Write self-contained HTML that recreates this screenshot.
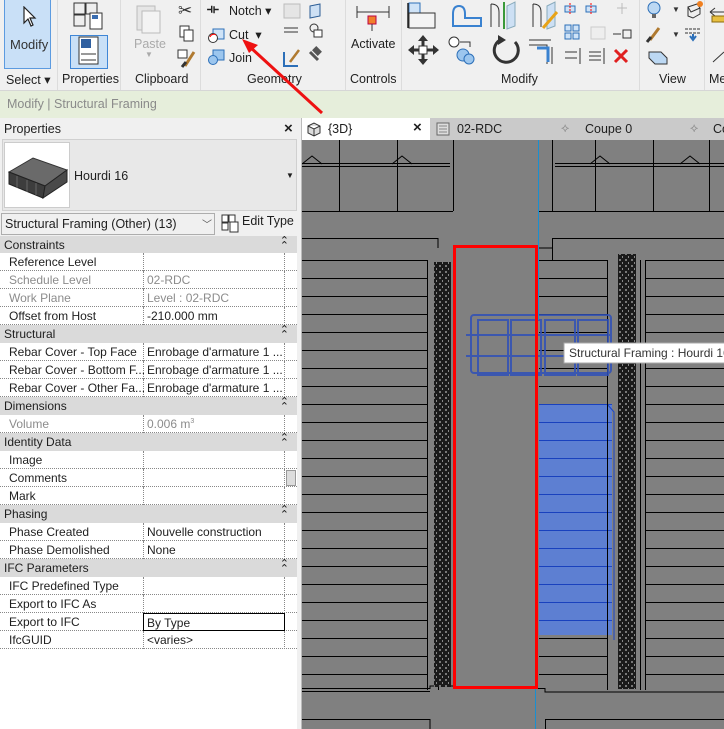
<!DOCTYPE html>
<html><head><meta charset="utf-8"><style>
*{margin:0;padding:0;box-sizing:border-box}
body{width:724px;height:729px;overflow:hidden;position:relative;background:#fff;font-family:"Liberation Sans",sans-serif;font-size:12px;color:#1e1e1e}
.a{position:absolute}
.rib{left:0;top:0;width:724px;height:91px;background:#f0f0f0;border-bottom:1px solid #d6d6d6}
.lbl{position:absolute;top:72px;font-size:12.5px;color:#222}
.sep{position:absolute;top:0;width:1px;height:90px;background:#dcdcdc}
.ctx{left:0;top:91px;width:724px;height:27px;background:#e6eedb;color:#8a8a8a;font-size:12.5px;padding:6px 0 0 7px}
.t{position:absolute;font-size:12.5px;white-space:nowrap}
.row{position:absolute;left:0;width:297px;height:18px;background:#fff;border-bottom:1px dotted #888}
.row .n{position:absolute;left:9px;top:2px;white-space:nowrap}
.row .v{position:absolute;left:143px;top:0;width:142px;height:18px;border-left:1px dotted #888;border-right:1px dotted #888;padding:2px 0 0 3px;white-space:nowrap;overflow:hidden}
.row.g .n,.row.g .v{color:#8c8c8c}
.hd{position:absolute;left:0;width:297px;height:18px;background:#dadada;padding:2px 0 0 4px}
.hd:after{content:"⌃";position:absolute;right:8px;top:1px;font-size:11px;line-height:8px;border-bottom:0}
.hd:before{content:"⌃";position:absolute;right:8px;top:6px;font-size:11px;line-height:8px}
</style></head><body>
<div class="a rib">
  <div class="a" style="left:4px;top:0;width:47px;height:69px;background:#c9e0f7;border:1px solid #5c9be0;border-top:none"></div>
  <svg class="a" style="left:22px;top:6px" width="16" height="22"><path d="M2 1 L2 17 L6 13 L9 20 L11 19 L8 12 L13 12 Z" fill="#fff" stroke="#222" stroke-width="1.2"/></svg>
  <div class="t" style="left:10px;top:37px;font-size:13px;color:#333">Modify</div>
  <div class="lbl" style="left:6px">Select ▾</div>
  <div class="sep" style="left:57px"></div>
  <svg class="a" style="left:73px;top:1px" width="32" height="30"><rect x="1" y="2" width="11" height="11" fill="#eee" stroke="#333"/><rect x="13" y="2" width="11" height="11" fill="#eee" stroke="#333"/><rect x="1" y="14" width="11" height="11" fill="#eee" stroke="#333"/><rect x="17" y="12" width="12" height="16" fill="#fff" stroke="#333"/><rect x="19" y="14" width="6" height="4" fill="#3a6db0"/></svg>
  <div class="a" style="left:70px;top:35px;width:38px;height:34px;background:#c9e0f7;border:1px solid #3f86d6"></div>
  <svg class="a" style="left:77px;top:36px" width="24" height="30"><rect x="2" y="1" width="19" height="27" fill="#fff" stroke="#333"/><rect x="4" y="3" width="10" height="9" fill="#2f5fa0"/><line x1="4" y1="18" x2="19" y2="18" stroke="#333"/><line x1="4" y1="24" x2="19" y2="24" stroke="#333"/></svg>
  <div class="lbl" style="left:62px">Properties</div>
  <div class="sep" style="left:120px"></div>
  <svg class="a" style="left:134px;top:2px" width="30" height="34"><rect x="3" y="4" width="18" height="24" fill="#e6e6e6" stroke="#bbb"/><rect x="8" y="9" width="18" height="22" fill="#f3f3f3" stroke="#bbb"/></svg>
  <div class="t" style="left:134px;top:37px;color:#aaa">Paste</div>
  <div class="t" style="left:145px;top:50px;color:#aaa;font-size:8px">▼</div>
  <div class="t" style="left:178px;top:1px;font-size:17px;color:#333">✂</div>
  <svg class="a" style="left:178px;top:25px" width="18" height="18"><rect x="2" y="1" width="9" height="11" fill="#fff" stroke="#333"/><rect x="6" y="5" width="9" height="11" fill="#fff" stroke="#333"/></svg>
  <svg class="a" style="left:177px;top:48px" width="20" height="20"><rect x="1" y="2" width="9" height="8" fill="#fff" stroke="#333"/><path d="M8 18 L17 4" stroke="#b07a30" stroke-width="3"/><path d="M5 19 L9 14" stroke="#333" stroke-width="3"/></svg>
  <div class="lbl" style="left:135px">Clipboard</div>
  <div class="sep" style="left:200px"></div>
  <div class="t" style="left:207px;top:1px;font-weight:bold;font-size:13px">⟛</div>
  <div class="t" style="left:229px;top:3px">Notch ▾</div>
  <svg class="a" style="left:207px;top:27px" width="18" height="16"><rect x="6" y="2" width="11" height="10" fill="#cfe3f7" stroke="#2c6fb8"/><circle cx="6" cy="11" r="4.5" fill="#fff" stroke="#333"/><path d="M3 10 A4 4 0 0 1 9 8" stroke="red" fill="none"/></svg>
  <div class="t" style="left:229px;top:27px">Cut &nbsp;▾</div>
  <svg class="a" style="left:207px;top:49px" width="18" height="16"><rect x="6" y="1" width="11" height="10" fill="#9cc6ee" stroke="#2c6fb8"/><circle cx="6" cy="11" r="4.5" fill="#9cc6ee" stroke="#2c6fb8"/></svg>
  <div class="t" style="left:229px;top:51px">Join</div>
  <svg class="a" style="left:282px;top:2px" width="60" height="66"><rect x="2" y="2" width="16" height="14" fill="#e5e5e5" stroke="#bbb"/><path d="M28 4 L38 2 L38 14 L28 16 Z" fill="#cde0f4" stroke="#2c5d95"/><path d="M2 26 L16 26 M2 30 L16 30" stroke="#333"/><circle cx="32" cy="26" r="4" fill="none" stroke="#333"/><rect x="32" y="28" width="8" height="7" fill="#fff" stroke="#333"/><path d="M2 50 L2 64 L16 64" stroke="#2c6fb8" stroke-width="2" fill="none"/><path d="M8 60 L17 48" stroke="#b07a30" stroke-width="2.5"/><path d="M28 50 L36 58" stroke="#555" stroke-width="3"/><rect x="31" y="46" width="8" height="6" fill="#555" transform="rotate(45 35 49)"/></svg>
  <div class="lbl" style="left:247px">Geometry</div>
  <div class="sep" style="left:345px"></div>
  <svg class="a" style="left:355px;top:0" width="36" height="34"><path d="M2 12 L34 12 M2 6 L2 18 M34 6 L34 18" stroke="#333"/><rect x="13" y="16" width="8" height="8" fill="#f07f2a" stroke="#b04"/><line x1="17" y1="24" x2="17" y2="31" stroke="#333"/></svg>
  <div class="t" style="left:351px;top:37px">Activate</div>
  <div class="lbl" style="left:350px">Controls</div>
  <div class="sep" style="left:401px"></div>
  <svg class="a" style="left:405px;top:0" width="230" height="68"><rect x="4" y="3" width="11" height="10" fill="#cfe3f7" stroke="#2c6fb8"/><rect x="4" y="13" width="26" height="15" fill="#f4f4f4" stroke="#333"/><line x1="3" y1="3" x2="3" y2="28" stroke="#222" stroke-width="1.5"/>
  <path d="M48 26 L48 14 Q48 6 54 6 Q60 6 60 14 L60 18 L76 18 L76 26 Z" fill="none" stroke="#3a82d0" stroke-width="2"/>
  <path d="M86 4 L86 27 M86 4 Q94 4 94 12 L94 27" fill="none" stroke="#333"/><line x1="99" y1="2" x2="99" y2="29" stroke="#3a9a3a" stroke-width="2"/><path d="M102 6 L110 2 L110 26 L102 29 Z" fill="#cde0f4" stroke="#8ab"/>
  <path d="M128 4 L128 27 M128 4 Q136 4 136 12 L136 27" fill="none" stroke="#333"/><path d="M142 6 L150 2 L150 26 L142 29 Z" fill="#cde0f4" stroke="#8ab"/><path d="M138 28 L152 12" stroke="#e8a317" stroke-width="3"/>
  <path d="M5 50 L32 50 M18 37 L18 63" stroke="#333" stroke-width="3"/><path d="M18 35 L13 41 L23 41Z M18 65 L13 59 L23 59Z M3 50 L9 45 L9 55Z M34 50 L28 45 L28 55Z" fill="#333"/><rect x="14" y="46" width="8" height="8" fill="#fff" stroke="#333"/>
  <circle cx="49" cy="42" r="5" fill="#fff" stroke="#333"/><circle cx="58" cy="55" r="6" fill="#9cc6ee" stroke="#2c6fb8"/><circle cx="64" cy="59" r="5" fill="#9cc6ee" stroke="#2c6fb8"/><path d="M55 42 L65 42 L65 47" stroke="#333" fill="none"/>
  <path d="M110 42 A12 12 0 1 1 95 40" stroke="#333" stroke-width="3" fill="none"/><path d="M93 35 L101 40 L93 45Z" fill="#333"/>
  <path d="M124 40 L146 40 M124 45 L142 45 L142 64 M147 47 L147 64" stroke="#333" fill="none"/><path d="M132 48 L143 48 L143 62" stroke="#3a82d0" stroke-width="3" fill="none"/>
  <g stroke="#2c6fb8" fill="#cfe3f7"><rect x="160" y="6" width="10" height="6"/><rect x="181" y="6" width="10" height="6"/><rect x="160" y="25" width="6" height="6"/><rect x="168" y="25" width="6" height="6"/><rect x="160" y="33" width="6" height="6"/><rect x="168" y="33" width="6" height="6"/></g>
  <line x1="165" y1="3" x2="165" y2="15" stroke="red" stroke-dasharray="2 1"/><line x1="186" y1="3" x2="186" y2="15" stroke="red" stroke-dasharray="2 1"/>
  <rect x="186" y="27" width="14" height="12" fill="#eee" stroke="#ccc"/><path d="M160 52 L172 52 M160 58 L172 58 M175 48 L175 64" stroke="#333"/><path d="M184 52 L196 52 M184 56 L196 56 M184 60 L196 60 M199 48 L199 64" stroke="#333"/>
  <path d="M210 50 L222 62 M222 50 L210 62" stroke="#e02020" stroke-width="3"/><path d="M212 8 L222 8 M217 3 L217 14" stroke="#bbb"/><path d="M208 34 L216 34 M218 30 L226 30 L226 38 L218 38Z" stroke="#333" fill="none"/></svg>
  <div class="lbl" style="left:501px">Modify</div>
  <div class="sep" style="left:639px"></div>
  <svg class="a" style="left:645px;top:0" width="58" height="68"><circle cx="9" cy="8" r="6" fill="#bcd8f3" stroke="#2c6fb8"/><rect x="7" y="14" width="4" height="4" fill="#666"/><path d="M5 40 L14 28" stroke="#b07a30" stroke-width="3"/><path d="M2 42 L6 37" stroke="#333" stroke-width="3"/><path d="M43 7 L52 4 L55 8 L46 12 Z M43 7 L43 16 L48 18 L55 14 L55 8" fill="#eee" stroke="#333"/><circle cx="55" cy="4" r="3" fill="#f08020"/><path d="M40 29 L56 29 M40 33 L56 33" stroke="#333" stroke-dasharray="3 1"/><path d="M48 34 L48 38 M45 36 L48 40 L51 36" stroke="#2c6fb8" stroke-width="2" fill="none"/><path d="M4 52 L16 52 L22 58 L22 64 L10 64 L4 58Z" fill="#bcd8f3" stroke="#333"/><text x="27" y="12" font-size="8" fill="#333">▼</text><text x="27" y="37" font-size="8" fill="#333">▼</text></svg>
  <div class="lbl" style="left:659px">View</div>
  <div class="sep" style="left:704px"></div>
  <svg class="a" style="left:708px;top:0" width="16" height="68"><path d="M2 12 L16 12 M2 12 L7 8 M2 12 L7 16" stroke="#333" fill="none"/><rect x="4" y="16" width="14" height="6" fill="#e8c040" stroke="#8a6a10"/><path d="M5 62 L16 52" stroke="#333"/></svg>
  <div class="lbl" style="left:709px">Me</div>
</div>
<div class="a ctx">Modify | Structural Framing</div>

<!-- properties panel -->
<div class="a" style="left:0;top:118px;width:297px;height:611px;background:#fff"></div>
<div class="a" style="left:0;top:118px;width:297px;height:118px;background:#f0f0f0"></div>
<div class="t" style="left:4px;top:122px">Properties</div>
<div class="t" style="left:284px;top:120px;font-size:15px;font-weight:bold">×</div>
<div class="a" style="left:2px;top:139px;width:295px;height:72px;background:#e8e8e8;border:1px solid #d0d0d0"></div>
<div class="a" style="left:4px;top:142px;width:66px;height:66px;background:#fff;border:1px solid #ccc"></div>
<svg class="a" style="left:5px;top:150px" width="64" height="50"><path d="M4 22 L28 8 L62 20 L40 36 Z" fill="#6a6a6a" stroke="#333"/><path d="M4 22 L4 34 L38 48 L40 36 Z" fill="#3d3d3d" stroke="#222"/><path d="M40 36 L62 20 L62 32 L38 48 Z" fill="#4a4a4a" stroke="#222"/><path d="M12 26 L12 38 M22 30 L22 42 M31 33 L31 45" stroke="#666"/></svg>
<div class="t" style="left:74px;top:169px">Hourdi 16</div>
<div class="t" style="left:286px;top:171px;font-size:8px">▼</div>
<div class="a" style="left:1px;top:213px;width:214px;height:22px;background:#f0f0f0;border:1px solid #adadad"></div>
<div class="t" style="left:5px;top:217px">Structural Framing (Other) (13)</div>
<div class="t" style="left:202px;top:216px;font-size:10px;color:#555">﹀</div>
<svg class="a" style="left:221px;top:213px" width="18" height="20"><rect x="1" y="2" width="6" height="7" fill="#fff" stroke="#333"/><rect x="8" y="2" width="6" height="7" fill="#fff" stroke="#333"/><rect x="1" y="10" width="6" height="7" fill="#fff" stroke="#333"/><rect x="9" y="9" width="8" height="10" fill="#fff" stroke="#333"/></svg>
<div class="t" style="left:242px;top:214px">Edit Type</div>

<div class="hd" style="top:236px">Constraints</div>
<div class="row" style="top:253px"><span class="n">Reference Level</span><span class="v"></span></div>
<div class="row g" style="top:271px"><span class="n">Schedule Level</span><span class="v">02-RDC</span></div>
<div class="row g" style="top:289px"><span class="n">Work Plane</span><span class="v">Level : 02-RDC</span></div>
<div class="row" style="top:307px"><span class="n">Offset from Host</span><span class="v">-210.000 mm</span></div>
<div class="hd" style="top:325px">Structural</div>
<div class="row" style="top:343px"><span class="n">Rebar Cover - Top Face</span><span class="v">Enrobage d'armature 1 ...</span></div>
<div class="row" style="top:361px"><span class="n">Rebar Cover - Bottom F...</span><span class="v">Enrobage d'armature 1 ...</span></div>
<div class="row" style="top:379px"><span class="n">Rebar Cover - Other Fa...</span><span class="v">Enrobage d'armature 1 ...</span></div>
<div class="hd" style="top:397px">Dimensions</div>
<div class="row g" style="top:415px"><span class="n">Volume</span><span class="v">0.006 m<sup style="font-size:7px">3</sup></span></div>
<div class="hd" style="top:433px">Identity Data</div>
<div class="row" style="top:451px"><span class="n">Image</span><span class="v"></span></div>
<div class="row" style="top:469px"><span class="n">Comments</span><span class="v"></span></div>
<div class="row" style="top:487px"><span class="n">Mark</span><span class="v"></span></div>
<div class="hd" style="top:505px">Phasing</div>
<div class="row" style="top:523px"><span class="n">Phase Created</span><span class="v">Nouvelle construction</span></div>
<div class="row" style="top:541px"><span class="n">Phase Demolished</span><span class="v">None</span></div>
<div class="hd" style="top:559px">IFC Parameters</div>
<div class="row" style="top:577px"><span class="n">IFC Predefined Type</span><span class="v"></span></div>
<div class="row" style="top:595px"><span class="n">Export to IFC As</span><span class="v"></span></div>
<div class="row" style="top:613px"><span class="n">Export to IFC</span><span class="v" style="border:1px solid #000">By Type</span></div>
<div class="row" style="top:631px"><span class="n">IfcGUID</span><span class="v">&lt;varies&gt;</span></div>
<div class="a" style="left:286px;top:470px;width:10px;height:16px;background:#dcdcdc;border:1px solid #999"></div>
<div class="a" style="left:297px;top:118px;width:5px;height:611px;background:#f0f0f0;border-right:1px solid #bbb"></div>

<!-- tabs -->
<div class="a" style="left:302px;top:118px;width:422px;height:22px;background:#cacaca"></div>
<div class="a" style="left:302px;top:118px;width:128px;height:22px;background:#fff"></div>
<svg class="a" style="left:306px;top:121px" width="16" height="16"><path d="M2 5 L8 2 L14 5 L14 12 L8 15 L2 12 Z M2 5 L8 8 L14 5 M8 8 L8 15" fill="#ddd" stroke="#333"/></svg>
<div class="t" style="left:328px;top:122px">{3D}</div>
<div class="t" style="left:413px;top:119px;font-size:15px;font-weight:bold">×</div>
<svg class="a" style="left:435px;top:121px" width="16" height="16"><rect x="2" y="2" width="12" height="12" fill="#ddd" stroke="#666"/><path d="M4 5 H12 M4 8 H12 M4 11 H12" stroke="#888"/></svg>
<div class="t" style="left:457px;top:122px">02-RDC</div>
<div class="t" style="left:561px;top:121px;color:#888">⟡</div>
<div class="t" style="left:585px;top:122px">Coupe 0</div>
<div class="t" style="left:690px;top:121px;color:#888">⟡</div>
<div class="t" style="left:713px;top:122px">Co</div>

<!-- viewport -->
<svg class="a" style="left:302px;top:140px" width="422" height="589" viewBox="302 140 422 589">
<defs>
<pattern id="hl" x="0" y="260" width="20" height="18" patternUnits="userSpaceOnUse"><rect width="20" height="18" fill="#808080"/><line x1="0" y1="0.5" x2="20" y2="0.5" stroke="#000"/></pattern>
<pattern id="hb" x="0" y="260" width="20" height="18" patternUnits="userSpaceOnUse"><rect width="20" height="18" fill="#5b7fd6"/><line x1="0" y1="0.5" x2="20" y2="0.5" stroke="#1a44c8"/></pattern>
<pattern id="ht" x="0" y="0" width="6" height="6" patternUnits="userSpaceOnUse"><rect width="6" height="6" fill="#1a1a1a"/><rect x="1" y="1" width="2" height="2" fill="#777"/><rect x="4" y="4" width="1" height="2" fill="#888"/></pattern>
</defs>
<rect x="302" y="140" width="422" height="589" fill="#808080"/>
<g stroke="#000" stroke-width="1" fill="none">
<path d="M302 163.5 H450 M302 166.5 H450 M555 163.5 H724 M555 166.5 H724"/>
<path d="M339.5 140 V211 M397.5 140 V211 M453.5 140 V211 M552.5 140 V211 M595.5 140 V211 M653.5 140 V211 M709.5 140 V211"/>
<path d="M302 211.5 H453 M538 211.5 H724"/>
<path d="M302 238.5 H438 V248 M552 238.5 H724 M552.5 238 V260 M538 248 H552"/>
<path d="M302 164 L312 156 L322 164 M392 164 L402 156 L412 164 M590 164 L600 156 L610 164 M680 164 L690 156 L700 164"/>
</g>
<rect x="302" y="260" width="125" height="430" fill="url(#hl)"/>
<rect x="539" y="260" width="68" height="430" fill="url(#hl)"/>
<rect x="645" y="260" width="79" height="430" fill="url(#hl)"/>
<rect x="539" y="404" width="73" height="231" fill="url(#hb)" opacity="0.95"/>
<path d="M607 404 L614 412 L614 640" stroke="#1a44c8" fill="none"/>
<g stroke="#000" fill="none">
<path d="M427.5 260 V690 M438.5 300 V690 M607.5 260 V690 M640.5 260 V690 M645.5 260 V690"/>
<path d="M302 688.5 H430 V686 H453 M538 688.5 H545 V692 H724 M302 691.5 H430 M302 719.5 H430 V729 M545 719.5 H724 M545.5 719 V729"/>
</g>
<rect x="434" y="262" width="17" height="425" fill="url(#ht)"/>
<rect x="618" y="254" width="18" height="435" fill="url(#ht)"/>
<g stroke="#3050b8" stroke-width="2" fill="none" opacity="0.85">
<rect x="471" y="315" width="140" height="58" rx="3"/><rect x="478" y="320" width="30" height="55"/><rect x="511" y="320" width="30" height="55"/><rect x="545" y="320" width="30" height="55"/><rect x="578" y="320" width="30" height="55"/><line x1="466" y1="335" x2="612" y2="335"/><line x1="466" y1="356" x2="612" y2="356"/>
</g>
<line x1="538.5" y1="140" x2="538.5" y2="320" stroke="#1a8fd0"/>
<line x1="535.5" y1="624" x2="535.5" y2="729" stroke="#1a8fd0"/>
<rect x="454.5" y="246.5" width="82" height="441" fill="none" stroke="#f00" stroke-width="3"/>
<rect x="564" y="343" width="170" height="20" fill="#fff" stroke="#aaa"/>
<text x="569" y="357" font-family="Liberation Sans,sans-serif" font-size="12" fill="#333">Structural Framing : Hourdi 16</text>
</svg>

<!-- arrow -->
<svg class="a" style="left:0;top:0" width="724" height="729" pointer-events="none"><line x1="322" y1="113" x2="250" y2="47" stroke="#ee1111" stroke-width="3"/><path d="M242 39 L258 45 L249 53 Z" fill="#ee1111"/></svg>
</body></html>
